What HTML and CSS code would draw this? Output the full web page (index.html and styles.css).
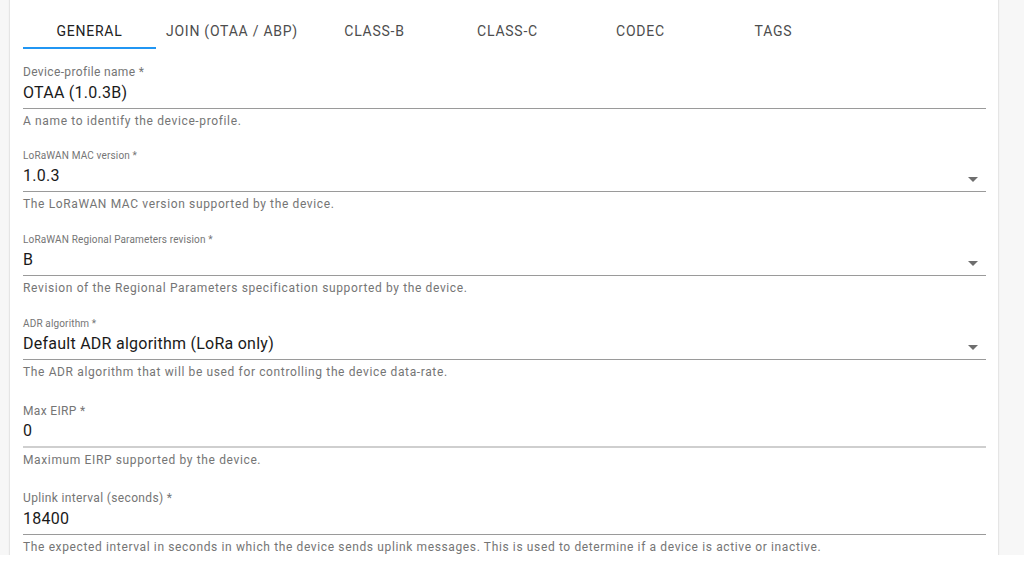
FILE: index.html
```html
<!DOCTYPE html>
<html lang="en">
<head>
<meta charset="utf-8">
<title>Device profile</title>
<link rel="stylesheet" href="styles.css">
</head>
<body>
<div class="page">
  <div class="card">
    <nav class="tabs">
      <div class="tab active">General</div>
      <div class="tab">Join (OTAA / ABP)</div>
      <div class="tab">Class-B</div>
      <div class="tab">Class-C</div>
      <div class="tab">Codec</div>
      <div class="tab">Tags</div>
    </nav>

    <div class="field f1">
      <div class="label">Device-profile name *</div>
      <div class="value">OTAA (1.0.3B)</div>
      <div class="helper">A name to identify the device-profile.</div>
    </div>

    <div class="field select f2">
      <div class="label">LoRaWAN MAC version *</div>
      <div class="value"><span>1.0.3</span><svg class="arrow" width="10" height="5" viewBox="7 10 10 5"><path d="M7 10l5 5 5-5z"/></svg></div>
      <div class="helper">The LoRaWAN MAC version supported by the device.</div>
    </div>

    <div class="field select f3">
      <div class="label">LoRaWAN Regional Parameters revision *</div>
      <div class="value"><span>B</span><svg class="arrow" width="10" height="5" viewBox="7 10 10 5"><path d="M7 10l5 5 5-5z"/></svg></div>
      <div class="helper">Revision of the Regional Parameters specification supported by the device.</div>
    </div>

    <div class="field select f4">
      <div class="label">ADR algorithm *</div>
      <div class="value"><span>Default ADR algorithm (LoRa only)</span><svg class="arrow" width="10" height="5" viewBox="7 10 10 5"><path d="M7 10l5 5 5-5z"/></svg></div>
      <div class="helper">The ADR algorithm that will be used for controlling the device data-rate.</div>
    </div>

    <div class="field f5">
      <div class="label">Max EIRP *</div>
      <div class="value hovered">0</div>
      <div class="helper">Maximum EIRP supported by the device.</div>
    </div>

    <div class="field f6">
      <div class="label">Uplink interval (seconds) *</div>
      <div class="value">18400</div>
      <div class="helper">The expected interval in seconds in which the device sends uplink messages. This is used to determine if a device is active or inactive.</div>
    </div>
  </div>
</div>
</body>
</html>
```

FILE: styles.css
```css
html, body {
  margin: 0;
  padding: 0;
  background: #ffffff;
}

body {
  font-family: Roboto, "Liberation Sans", Arial, sans-serif;
  color: #212121;
}

.page {
  height: 555px;
  overflow: hidden;
  background: #f7f7f7;
  padding-left: 10px;
}

.card {
  width: 988px;
  height: 555px;
  box-sizing: border-box;
  background: #ffffff;
  padding: 0 12px 0 13px;
  box-shadow: 1px 0 1px rgba(0, 0, 0, 0.07), -1px 0 1px rgba(0, 0, 0, 0.07);
}

.tabs {
  display: flex;
}

.tab {
  min-width: 133px;
  box-sizing: border-box;
  padding: 21px 10px 6px;
  line-height: 20px;
  font-size: 14px;
  letter-spacing: 0.75px;
  text-transform: uppercase;
  text-align: center;
  color: #4d4d4d;
  border-bottom: 2px solid transparent;
}

.tab.active {
  color: #212121;
  border-bottom-color: #2196f3;
}

.field {
  display: flex;
  flex-direction: column;
}

.label {
  font-size: 12px;
  line-height: 14px;
  letter-spacing: 0.35px;
  color: #757575;
}

.select .label {
  font-size: 10px;
  line-height: 12px;
  letter-spacing: 0.15px;
}

.value {
  display: flex;
  justify-content: space-between;
  font-size: 16px;
  line-height: 19px;
  letter-spacing: 0.25px;
  padding: 4px 0 6px;
  border-bottom: 1px solid #9a9a9a;
  color: #1a1a1a;
}

.value.hovered {
  padding-top: 3px;
  border-bottom: 2px solid #cfcfcf;
}

.arrow {
  display: block;
  fill: #6e6e6e;
  margin: 11px 8px 0 0;
}

.helper {
  margin-top: 5px;
  font-size: 12px;
  line-height: 14px;
  letter-spacing: 0.63px;
  color: #757575;
}

.f1 { margin-top: 16px; }
.f2 { margin-top: 22px; }
.f3 { margin-top: 23px; }
.f4 { margin-top: 23px; }
.f5 { margin-top: 25px; }
.f6 { margin-top: 24px; }
```
